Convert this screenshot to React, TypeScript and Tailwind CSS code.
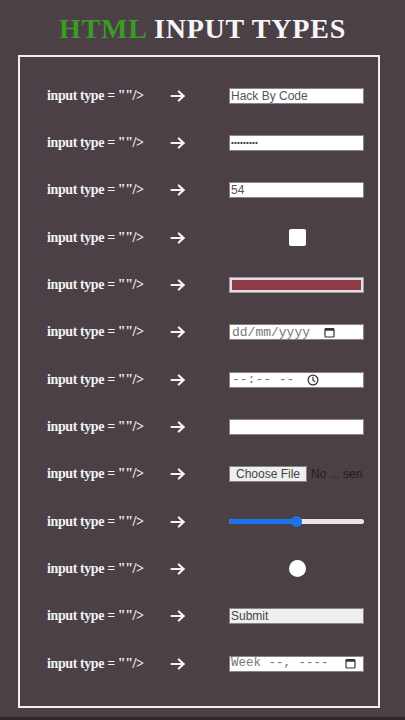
import React from "react";

const serif = { fontFamily: '"Liberation Serif", "Times New Roman", serif' };
const sans = { fontFamily: '"Liberation Sans", Arial, sans-serif' };
const mono = { fontFamily: '"Liberation Mono", "Courier New", monospace' };

function Arrow() {
  return (
    <svg width="16" height="12" viewBox="0 0 16 12" fill="none">
      <path d="M1.5 6H13.5" stroke="#f4f4f4" strokeWidth="2.2" strokeLinecap="round" />
      <path d="M8.8 1.5L13.6 6L8.8 10.5" stroke="#f4f4f4" strokeWidth="2.2" strokeLinecap="round" strokeLinejoin="round" />
    </svg>
  );
}

function CalendarIcon() {
  return (
    <svg width="11" height="11" viewBox="0 0 11 11" fill="none">
      <rect x="1" y="1.5" width="9" height="8.5" rx="1" stroke="#333" strokeWidth="1.2" />
      <rect x="1" y="1.5" width="9" height="2.2" fill="#333" />
    </svg>
  );
}

function ClockIcon() {
  return (
    <svg width="12" height="12" viewBox="0 0 12 12" fill="none">
      <circle cx="6" cy="6" r="4.9" stroke="#333" strokeWidth="1.2" />
      <path d="M6 3.2V6.2L7.8 7.6" stroke="#333" strokeWidth="1.2" strokeLinecap="round" />
    </svg>
  );
}

const boxCls = "w-[135px] h-[16px] bg-white border border-[#8a8288] flex items-center";

function TextBox({ children }: { children?: React.ReactNode }) {
  return (
    <div className={boxCls + " pl-[1px] text-[12px] text-[#555] leading-none"} style={sans}>
      {children}
    </div>
  );
}

const rows: React.ReactNode[] = [
  <TextBox key="t">Hack By Code</TextBox>,
  <div key="p" className={boxCls + " pl-[1px]"}>
    <span className="text-[8px] tracking-[0.2px] text-[#333] leading-none" style={sans}>
      •••••••••
    </span>
  </div>,
  <TextBox key="n">54</TextBox>,
  <div key="c" className="w-[135px] flex justify-center">
    <div className="w-[17px] h-[17px] bg-white rounded-[2px] ml-[1px]" />
  </div>,
  <div key="col" className="w-[135px] h-[16px] bg-[#e4e0e2] border border-[#a09aa0] p-[2px]">
    <div className="w-full h-full bg-[#8f3a48]" />
  </div>,
  <div key="d" className={boxCls + " pl-[2px] pr-[28px] justify-between"}>
    <span className="text-[13px] text-[#777] leading-none" style={mono}>dd/mm/yyyy</span>
    <CalendarIcon />
  </div>,
  <div key="tm" className={boxCls + " pl-[2px]"}>
    <span className="text-[13px] text-[#777] leading-none whitespace-pre" style={mono}>--:-- --</span>
    <span className="ml-[13px] flex"><ClockIcon /></span>
  </div>,
  <TextBox key="e" />,
  <div key="f" className="w-[135px] h-[16px] flex items-center" style={sans}>
    <div className="h-[16px] w-[78px] bg-[#efefef] border border-[#8a8288] flex items-center justify-center text-[12px] text-[#444] leading-none">
      Choose File
    </div>
    <span className="ml-[4px] text-[12px] text-[#241e22] leading-none whitespace-nowrap">No ... sen</span>
  </div>,
  <div key="r" className="w-[135px] h-[16px] relative flex items-center">
    <div className="w-full h-[5px] rounded-full bg-[#e8e6e8] overflow-hidden">
      <div className="h-full w-[68px] bg-[#1a73e8]" />
    </div>
    <div className="absolute left-[62px] top-[2.5px] w-[11px] h-[11px] rounded-full bg-[#1a73e8]" />
  </div>,
  <div key="ra" className="w-[135px] flex justify-center">
    <div className="w-[17px] h-[17px] bg-white rounded-full ml-[1px]" />
  </div>,
  <div key="s" className="w-[135px] h-[16px] bg-[#efefef] border border-[#8a8288] flex items-center pl-[1px] text-[12px] text-[#444] leading-none" style={sans}>
    Submit
  </div>,
  <div key="w" className={boxCls + " pl-[1px] pr-[7px] justify-between"}>
    <span className="text-[12.5px] text-[#777] leading-none whitespace-pre" style={mono}>Week --, ----</span>
    <CalendarIcon />
  </div>,
];

export default function App() {
  return (
    <div className="w-[405px] h-[720px] bg-[#4a4046] flex flex-col overflow-hidden">
      <div className="h-[717px] flex flex-col">
        <div className="h-[55px] pt-[3px] flex items-center justify-center" style={serif}>
          <h1 className="text-[28px] font-bold leading-none tracking-[0.8px]">
            <span className="text-[#3c9a28]">HTML</span>{" "}
            <span className="text-[#f6f6f6]">INPUT TYPES</span>
          </h1>
        </div>
        <div className="ml-[18px] w-[362px] h-[653px] border-2 border-[#f2eef0] pt-[15px] flex flex-col">
          {rows.map((ctrl, i) => (
            <div key={i} className="h-[47.33px] flex items-center shrink-0">
              <div className="w-[145px] pl-[27px] text-[14px] font-bold text-[#f2f2f2] leading-none whitespace-nowrap tracking-[-0.4px]" style={serif}>
                input type = ""/&gt;
              </div>
              <div className="w-[26px] flex justify-center">
                <Arrow />
              </div>
              <div className="ml-[38px] flex items-center">{ctrl}</div>
            </div>
          ))}
        </div>
      </div>
      <div className="h-[3px] bg-[#2a2729]" />
    </div>
  );
}
